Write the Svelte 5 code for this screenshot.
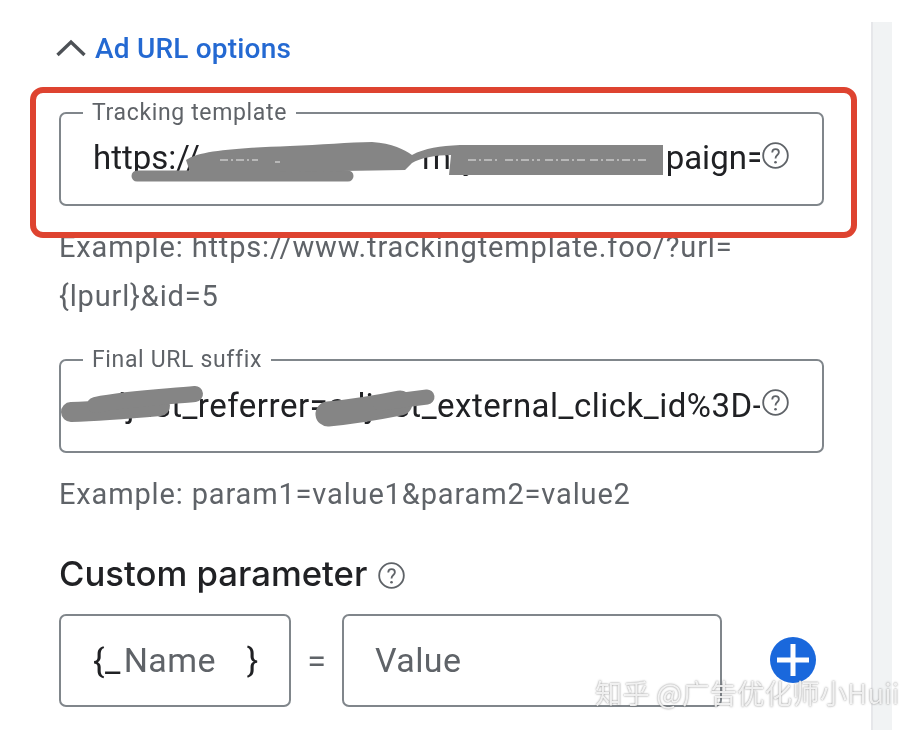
<script>
  const help = 'M9.3 9.6c0-1.6 1.2-2.8 2.8-2.8s2.7 1.1 2.7 2.6c0 2.2-2.8 2.3-2.8 5';
</script>

{#snippet helpIcon(cls)}
  <svg class={cls} viewBox="0 0 24 24" aria-hidden="true">
    <circle cx="12" cy="12" r="10.2" />
    <path d={help} />
    <circle class="dot" cx="12" cy="17.6" r="1.1" />
  </svg>
{/snippet}

<div class="page">
  <main class="main">
    <button class="toggle">
      <svg class="chevron" viewBox="0 0 30 18" aria-hidden="true"><path d="M1.5 16 15 3l13.5 13" /></svg>
      <span class="toggle-label">Ad URL options</span>
    </button>

    <section class="field first">
      <span class="legend">Tracking template</span>
      <div class="value">
        <span>https://</span>
        <span class="mid">m/j</span>
        <span class="tail">paign=</span>
      </div>
      {@render helpIcon('help inside')}
      <div class="highlight"></div>
    </section>
    <p class="hint">Example: https://www.trackingtemplate.foo/?url=<br />{'{'}lpurl{'}'}&amp;id=5</p>

    <section class="field second">
      <span class="legend">Final URL suffix</span>
      <div class="value suffix">adjust_referrer=adjust_external_click_id%3D-</div>
      {@render helpIcon('help inside')}
    </section>
    <p class="hint">Example: param1=value1&amp;param2=value2</p>

    <h2 class="title">Custom parameter {@render helpIcon('help')}</h2>

    <div class="params">
      <div class="box name"><span class="brace">{'{'}_</span><span class="muted gap">Name</span><span class="brace close">{'}'}</span></div>
      <span class="eq">=</span>
      <div class="box val"><span class="muted">Value</span></div>
      <button class="add" aria-label="Add">
        <svg viewBox="0 0 46 46" aria-hidden="true"><path d="M23 7v32M7 23h32" /></svg>
      </button>
    </div>
  </main>
  <aside class="strip"></aside>

  <svg class="redact" viewBox="0 0 922 730" aria-hidden="true">
    <path class="line" d="M137 176H348" stroke-width="11" />
    <path class="fill" d="M186 160C200 150 240 148 290 146C320 145 350 142 372 142C392 143 405 150 412 155C425 148 440 146 460 145H663V175H449L451 155C435 155 420 158 412 163L405 170L280 172L190 172Z" />
    <path class="dash" d="M220 160H258M275 162H280M468 160H500M505 160H540M545 160H585M590 160H648" />
    <path class="line" d="M71 412C100 411 125 409 160 406" stroke-width="20" />
    <path class="line" d="M95 405C130 398 165 397 195 394" stroke-width="16" />
    <path class="line" d="M328 414C350 412 375 408 400 403" stroke-width="25" />
    <path class="line" d="M380 403 427 397" stroke-width="15" />
  </svg>

  <div class="watermark">知乎 @广告优化师小Huii</div>
</div>

<style>
  :global(body) {
    margin: 0;
    background: #fff;
  }
  .page {
    position: relative;
    display: flex;
    width: 922px;
    height: 730px;
    overflow: hidden;
    background: #fff;
    font-family: Roboto, "Liberation Sans", sans-serif;
    color: #202124;
    filter: blur(0.45px);
  }
  .main {
    box-sizing: border-box;
    width: 871px;
    padding: 28px 47px 0 59px;
  }
  .strip {
    box-sizing: border-box;
    width: 21px;
    margin-top: 22px;
    background: #f1f3f4;
    border-left: 2px solid #e6e7ea;
  }
  .toggle {
    display: flex;
    align-items: center;
    gap: 9px;
    height: 40px;
    padding: 0;
    margin-left: -3px;
    border: 0;
    background: none;
    font: 500 28px/40px Roboto, sans-serif;
    letter-spacing: 0.2px;
    color: #2469d2;
  }
  .toggle-label {
    padding-top: 2px;
  }
  .chevron {
    width: 30px;
    height: 18px;
    fill: none;
    stroke: #4d5156;
    stroke-width: 3.4;
  }
  .field {
    position: relative;
    box-sizing: border-box;
    height: 94px;
    margin-top: 17px;
    border: 2px solid #80868b;
    border-radius: 7px;
  }
  .first {
    margin-top: 44px;
  }
  .second {
    margin-top: 38px;
  }
  .legend {
    position: absolute;
    top: -14px;
    left: 22px;
    padding: 0 9px;
    background: #fff;
    font-size: 23px;
    line-height: 26px;
    letter-spacing: 0.65px;
    color: #5f6368;
  }
  .value {
    display: flex;
    margin: 21px 62px 0 32px;
    overflow: hidden;
    font-size: 33px;
    line-height: 46px;
    white-space: nowrap;
    color: #202124;
  }
  .mid {
    margin-left: 222px;
  }
  .tail {
    flex-shrink: 0;
    margin-left: auto;
    margin-right: -5px;
  }
  .suffix {
    display: block;
    margin-top: 22px;
    margin-left: 20px;
    padding-left: 8px;
    letter-spacing: 0.5px;
  }
  .help {
    width: 29px;
    height: 29px;
    fill: none;
    stroke: #5f6368;
    stroke-width: 1.5;
    vertical-align: -4px;
  }
  .dot {
    fill: #5f6368;
    stroke: none;
  }
  .inside {
    position: absolute;
    top: 27px;
    left: 700px;
  }
  .highlight {
    position: absolute;
    top: -27px;
    left: -31px;
    width: 815px;
    height: 139px;
    border: 6px solid #de4330;
    border-radius: 13px;
    pointer-events: none;
  }
  .hint {
    margin: 17px 0 0;
    font-size: 29px;
    line-height: 49px;
    letter-spacing: 0.85px;
    color: #5f6368;
  }
  .title {
    margin: 34px 0 0;
    font: 500 34.7px/40px Inter, Roboto, sans-serif;
    color: #202124;
  }
  .params {
    display: flex;
    align-items: center;
    margin-top: 21px;
    height: 93px;
  }
  .box {
    box-sizing: border-box;
    height: 93px;
    padding-bottom: 2px;
    border: 2px solid #80868b;
    border-radius: 7px;
    display: flex;
    align-items: center;
    font-size: 34px;
    letter-spacing: 0.4px;
  }
  .name {
    width: 232px;
    padding-left: 32px;
  }
  .val {
    width: 380px;
    padding-left: 31px;
  }
  .brace {
    color: #202124;
  }
  .gap {
    margin-left: 3px;
  }
  .close {
    margin-left: 31px;
  }
  .muted {
    color: #5f6368;
  }
  .eq {
    width: 51px;
    text-align: center;
    font-size: 34px;
    color: #5f6368;
  }
  .add {
    width: 46px;
    height: 46px;
    margin: 0 0 2px 48px;
    padding: 0;
    border: 0;
    border-radius: 50%;
    background: #1a68dc;
  }
  .add svg {
    display: block;
    fill: none;
    stroke: #fff;
    stroke-width: 5;
  }
  .redact {
    position: absolute;
    inset: 0;
    width: 922px;
    height: 730px;
  }
  .line {
    fill: none;
    stroke: #858585;
    stroke-linecap: round;
  }
  .fill {
    fill: #858585;
  }
  .dash {
    fill: none;
    stroke: #c9c9c9;
    stroke-width: 1.5;
    stroke-dasharray: 8 3 2 3;
  }
  .watermark {
    position: absolute;
    top: 674px;
    left: 595px;
    font-family: "Noto Sans CJK SC", sans-serif;
    font-size: 27.3px;
    line-height: 36px;
    letter-spacing: 0.2px;
    white-space: nowrap;
    color: rgba(255, 255, 255, 0.85);
    text-shadow: 0 0 2px rgba(90, 90, 90, 0.8);
  }
</style>
